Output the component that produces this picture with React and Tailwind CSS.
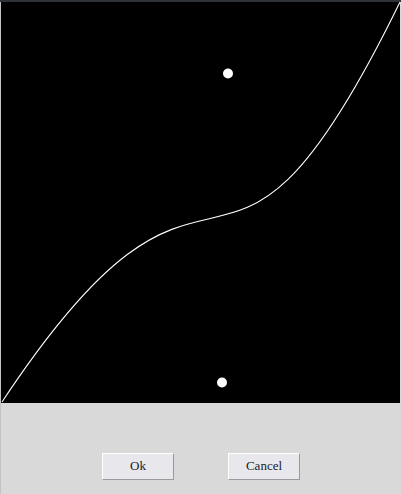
export default function App() {
  return (
    <div className="w-[401px] h-[494px] bg-[#d9d9d9] border-t-2 border-[#2f3237] flex flex-col overflow-hidden">
      <div className="flex h-[401px]">
        <div className="w-[1px] bg-[#c4c4c4]" />
        <div className="w-[399px] h-[401px] bg-black">
          <svg width="399" height="401" viewBox="0 0 399 401" className="block">
            <path d="M1 400 C222 66 216 375 399 0" fill="none" stroke="white" strokeWidth="1.1" />
            <circle cx="227" cy="71.5" r="5" fill="white" />
            <circle cx="221" cy="380.5" r="5" fill="white" />
          </svg>
        </div>
      </div>
      <div className="flex-1 border-l border-[#c4c4c4] relative">
        <div className="flex pt-[50px] pl-[101px] gap-[54px]">
          <button className="w-[72px] h-[27px] pb-[2px] bg-[#e8e8ec] border border-t-white border-l-white border-r-[#9a9a9a] border-b-[#9a9a9a] text-[13px] text-[#1a1a2a] flex items-center justify-center" style={{ fontFamily: '"Liberation Serif", serif' }}>
            Ok
          </button>
          <button className="w-[72px] h-[27px] pb-[2px] bg-[#e8e8ec] border border-t-white border-l-white border-r-[#9a9a9a] border-b-[#9a9a9a] text-[13px] text-[#1a1a2a] flex items-center justify-center" style={{ fontFamily: '"Liberation Serif", serif' }}>
            Cancel
          </button>
        </div>
      </div>
    </div>
  );
}
